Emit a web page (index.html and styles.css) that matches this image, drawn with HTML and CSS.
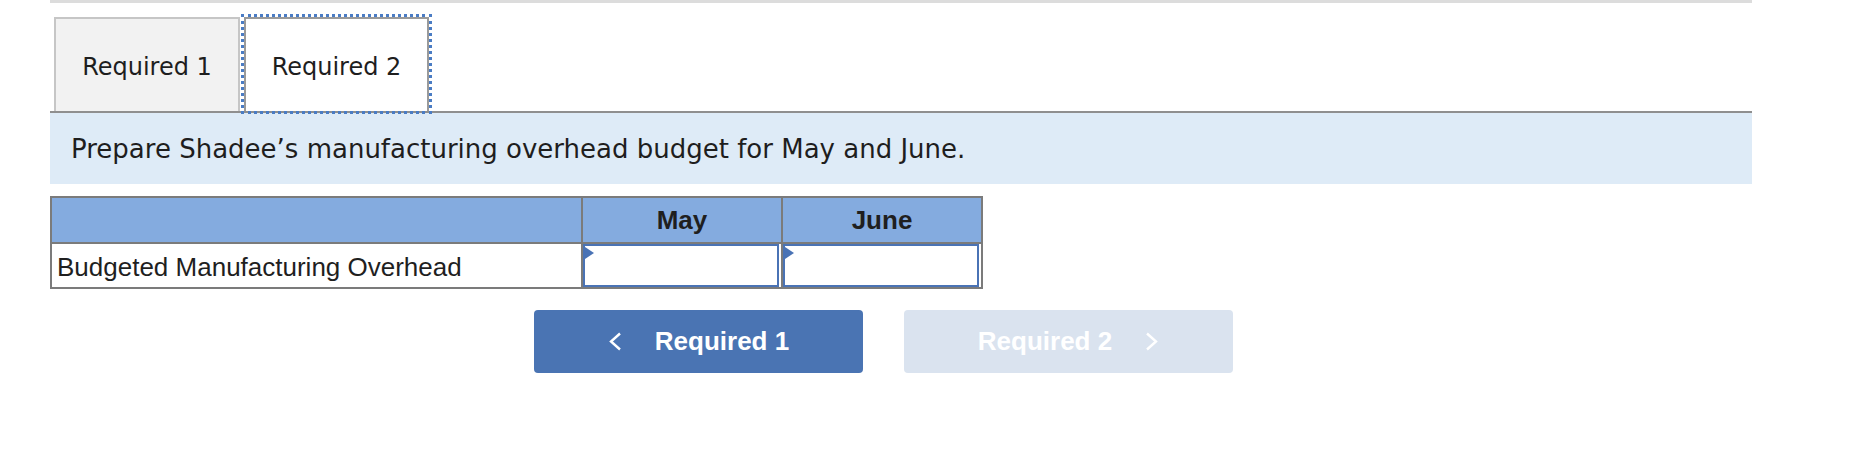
FILE: index.html
```html
<!DOCTYPE html>
<html lang="en">
<head>
<meta charset="utf-8">
<title>Manufacturing overhead budget</title>
<link rel="stylesheet" href="styles.css">
</head>
<body>
<div class="page">
  <div class="topbar"></div>
  <div class="tabs">
    <div class="tab">Required 1</div>
    <div class="tab active">Required 2</div>
  </div>
  <div class="prompt">Prepare Shadee’s manufacturing overhead budget for May and June.</div>
  <div class="sheet">
    <div class="hcell"></div>
    <div class="hcell">May</div>
    <div class="hcell">June</div>
    <div class="label">Budgeted Manufacturing Overhead</div>
    <div class="incell"><div class="input"><span class="marker"></span></div></div>
    <div class="incell"><div class="input"><span class="marker"></span></div></div>
  </div>
  <div class="nav">
    <button class="btn prev">
      <svg class="chev" width="14" height="19" viewBox="0 0 14 19"><polyline points="12,1.5 3,9.5 12,17.5" fill="none" stroke="#fff" stroke-width="2.4"/></svg>
      <span>Required 1</span>
    </button>
    <button class="btn next" disabled>
      <span>Required 2</span>
      <svg class="chev" width="14" height="19" viewBox="0 0 14 19"><polyline points="2,1.5 11,9.5 2,17.5" fill="none" stroke="#fff" stroke-width="2.4"/></svg>
    </button>
  </div>
</div>
</body>
</html>
```

FILE: styles.css
```css
html, body {
  margin: 0;
  padding: 0;
  background: #ffffff;
}

.page {
  margin-left: 50px;
  width: 1702px;
  font-family: "DejaVu Sans", Verdana, sans-serif;
  color: #1e1e1e;
}

.topbar {
  height: 3px;
  background: #dcdcdc;
}

.tabs {
  display: flex;
  gap: 4px;
  margin-top: 14px;
  padding-left: 4px;
  border-bottom: 2px solid #8f8f8f;
}

.tab {
  box-sizing: border-box;
  width: 186px;
  height: 94px;
  display: flex;
  align-items: center;
  justify-content: center;
  font-size: 24px;
  background: #f2f2f2;
  border: 2px solid #c6c6c6;
  border-bottom: 0;
  padding-top: 4px;
}

.tab.active {
  width: 185px;
  background: #ffffff;
  border-color: #9a9a9a;
  outline: 3px dotted #4a7cc4;
}

.prompt {
  height: 71px;
  display: flex;
  align-items: center;
  padding-left: 21px;
  background: #deebf7;
  font-size: 26px;
}

.sheet {
  margin-top: 12px;
  display: grid;
  grid-template-columns: 529px 198px 198px;
  grid-template-rows: 44px 43px;
  gap: 2px;
  width: max-content;
  background: #7b7b7b;
  border: 2px solid #7b7b7b;
  font-family: "Liberation Sans", Arial, sans-serif;
  font-size: 26px;
  color: #1f1f1f;
}

.hcell {
  background: #84abdf;
  display: flex;
  align-items: center;
  justify-content: center;
  font-weight: bold;
}

.label {
  background: #ffffff;
  display: flex;
  align-items: center;
  padding-left: 5px;
  padding-top: 3px;
}

.incell {
  background: #ffffff;
  padding-right: 2px;
}

.input {
  position: relative;
  box-sizing: border-box;
  height: 100%;
  border: 2px solid #4a73b5;
}

.marker {
  position: absolute;
  top: 1px;
  left: 0;
  width: 0;
  height: 0;
  border-left: 9px solid #4a73b5;
  border-top: 6px solid transparent;
  border-bottom: 6px solid transparent;
}

.nav {
  margin-top: 21px;
  display: flex;
  justify-content: center;
  gap: 41px;
  padding-right: 35px;
}

.btn {
  width: 329px;
  height: 63px;
  border: 0;
  border-radius: 4px;
  display: flex;
  align-items: center;
  justify-content: center;
  gap: 33px;
  font-family: "Liberation Sans", Arial, sans-serif;
  font-weight: bold;
  font-size: 26px;
  color: #ffffff;
  padding: 0;
}

.btn.prev {
  background: #4a74b3;
}

.btn.next {
  background: #dae3ef;
}

.chev {
  display: block;
}
```
